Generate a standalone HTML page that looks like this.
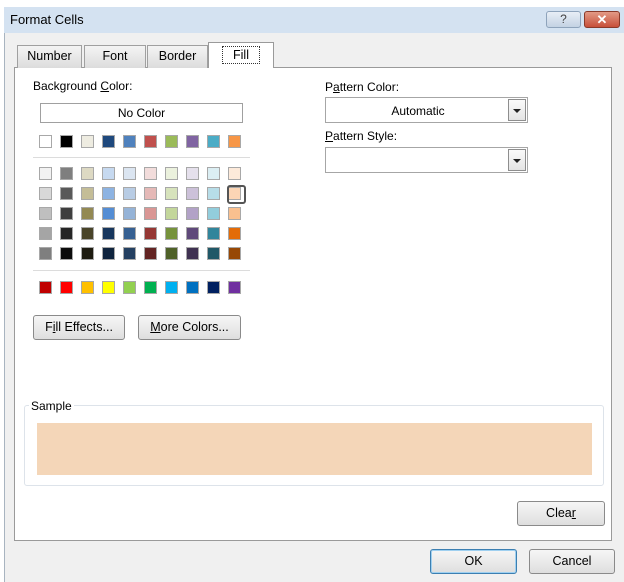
<!DOCTYPE html>
<html><head><meta charset="utf-8"><style>
*{box-sizing:border-box;margin:0;padding:0}
body{width:624px;height:582px;background:#fff;position:relative;overflow:hidden;font-family:"Liberation Sans",sans-serif;font-size:12px;color:#000}
.a{position:absolute}
.dlg{left:4px;top:7px;width:620px;height:575px;background:#f0f0f0;border-left:1px solid #a8b4c0}
.title{left:4px;top:7px;width:620px;height:26px;background:#d4e2f1}
.tab{position:absolute;top:45px;height:23px;background:linear-gradient(#f4f4f4,#dcdcdc);border:1px solid #a0a0a0;border-bottom:none;text-align:center;line-height:21px;font-size:12.5px}
.panel{left:14px;top:67px;width:598px;height:474px;background:#fff;border:1px solid #9a9a9a}
.sw{position:absolute;width:13px;height:13px;border:1px solid #a8a8a8}
.btn{position:absolute;height:25px;border:1px solid #8a8a8a;border-radius:3px;background:linear-gradient(#f6f6f6,#dedede);text-align:center;line-height:23px;font-size:12.5px}
.dd{position:absolute;border:1px solid #a6a6a6;background:#fff;height:26px;width:203px;left:325px}
.dd .ar{position:absolute;right:1px;top:1px;width:18px;height:22px;border:1px solid #8e8e8e;background:linear-gradient(#fafafa,#e4e4e4)}
.dd .ar:after{content:"";position:absolute;left:4px;top:9px;border-left:4px solid transparent;border-right:4px solid transparent;border-top:4px solid #222}
u{text-decoration:underline}
</style></head><body>
<div class="a dlg"></div>
<div class="a title"></div>
<div class="a" style="left:10px;top:12px;font-size:13px">Format Cells</div>
<div class="a" style="left:546px;top:11px;width:35px;height:17px;border:1px solid #8ea3bb;border-radius:3px;background:linear-gradient(#e8eef6,#c3d2e3);text-align:center;font-size:12px;line-height:15px;color:#444">?</div>
<div class="a" style="left:584px;top:11px;width:36px;height:17px;border:1px solid #8a3a2a;border-radius:3px;background:linear-gradient(#e39a86,#c7503a);text-align:center;font-size:13px;line-height:15px;color:#fff;font-weight:bold">✕</div>

<div class="a panel"></div>
<div class="tab" style="left:17px;width:65px">Number</div>
<div class="tab" style="left:84px;width:62px">Font</div>
<div class="tab" style="left:147px;width:61px">Border</div>
<div class="tab" style="left:208px;top:42px;height:26px;width:66px;background:#fff;border-color:#9a9a9a"><span style="border:1px dotted #333;padding:0 10px;line-height:16px;display:inline-block;margin-top:3px">Fill</span></div>

<div class="a" style="left:33px;top:79px">Background <u>C</u>olor:</div>
<div class="a" style="left:40px;top:103px;width:203px;height:20px;border:1px solid #a0a0a0;text-align:center;line-height:18px">No Color</div>
<div class="a" style="left:33px;top:157px;width:217px;height:1px;background:#dcdcdc"></div>
<div class="a" style="left:33px;top:270px;width:217px;height:1px;background:#dcdcdc"></div>
<div id="sw"></div>
<div class="a" style="left:227px;top:185px;width:19px;height:19px;border:2px solid #555;border-radius:3px"></div>

<div class="btn" style="left:33px;top:315px;width:92px">F<u>i</u>ll Effects...</div>
<div class="btn" style="left:138px;top:315px;width:103px"><u>M</u>ore Colors...</div>

<div class="a" style="left:325px;top:80px">P<u>a</u>ttern Color:</div>
<div class="dd" style="top:97px"><div class="a" style="left:0;width:184px;text-align:center;top:6px">Automatic</div><div class="ar"></div></div>
<div class="a" style="left:325px;top:129px"><u>P</u>attern Style:</div>
<div class="dd" style="top:147px"><div class="ar"></div></div>

<div class="a" style="left:24px;top:405px;width:580px;height:81px;border:1px solid #dde3ea;border-radius:3px"></div>
<div class="a" style="left:29px;top:399px;background:#fff;padding:0 2px">Sample</div>
<div class="a" style="left:37px;top:423px;width:555px;height:52px;background:#f4d6b8"></div>

<div class="btn" style="left:517px;top:501px;width:88px">Clea<u>r</u></div>
<div class="btn" style="left:430px;top:549px;width:87px;border-color:#3c7fb1;box-shadow:inset 0 0 0 1px #9fd0f0">OK</div>
<div class="btn" style="left:529px;top:549px;width:86px">Cancel</div>

<script>
var rows=[
["#ffffff","#000000","#eeece1","#1f497d","#4f81bd","#c0504d","#9bbb59","#8064a2","#4bacc6","#f79646"],
["#f2f2f2","#7f7f7f","#ddd9c3","#c6d9f0","#dbe5f1","#f2dcdb","#ebf1dd","#e5e0ec","#dbeef3","#fdeada"],
["#d8d8d8","#595959","#c4bd97","#8db3e2","#b8cce4","#e5b9b7","#d7e3bc","#ccc1d9","#b7dde8","#fbd5b5"],
["#bfbfbf","#3f3f3f","#938953","#548dd4","#95b3d7","#d99694","#c3d69b","#b2a2c7","#92cddc","#fac08f"],
["#a5a5a5","#262626","#494429","#17365d","#366092","#953734","#76923c","#5f497a","#31859b","#e36c09"],
["#7f7f7f","#0c0c0c","#1d1b10","#0f243e","#244061","#632423","#4f6128","#3f3151","#205867","#974806"],
["#c00000","#ff0000","#ffc000","#ffff00","#92d050","#00b050","#00b0f0","#0070c0","#002060","#7030a0"]];
var ys=[135,167,187,207,227,247,281],h="";
rows.forEach(function(r,i){r.forEach(function(c,j){h+='<div class="sw" style="left:'+(39+j*21)+'px;top:'+ys[i]+'px;background:'+c+'"></div>';});});
document.getElementById("sw").innerHTML=h;
</script>
</body></html>
